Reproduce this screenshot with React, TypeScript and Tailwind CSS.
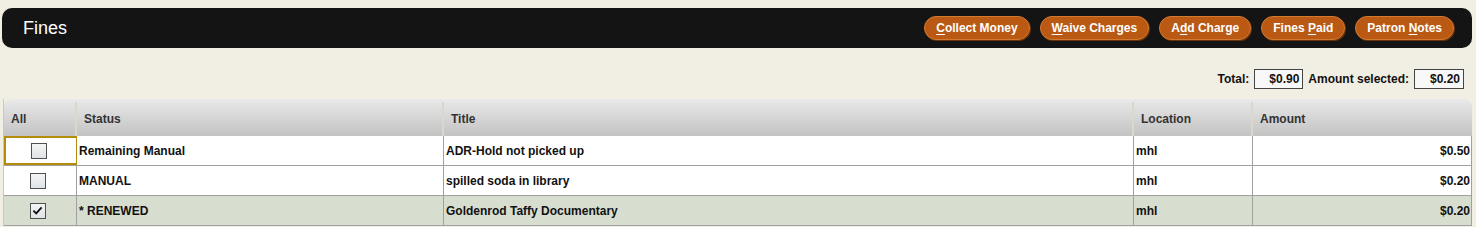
import React from 'react';

interface Fine {
  status: string;
  title: string;
  location: string;
  amount: string;
  checked: boolean;
}

const fines: Fine[] = [
  { status: 'Remaining Manual', title: 'ADR-Hold not picked up', location: 'mhl', amount: '$0.50', checked: false },
  { status: 'MANUAL', title: 'spilled soda in library', location: 'mhl', amount: '$0.20', checked: false },
  { status: '* RENEWED', title: 'Goldenrod Taffy Documentary', location: 'mhl', amount: '$0.20', checked: true },
];

// label split so the access key letter can be underlined
const actions: [string, string, string][] = [
  ['', 'C', 'ollect Money'],
  ['', 'W', 'aive Charges'],
  ['A', 'd', 'd Charge'],
  ['Fines ', 'P', 'aid'],
  ['Patron ', 'N', 'otes'],
];

const Checkbox: React.FC<{ checked: boolean }> = ({ checked }) => (
  <span className="flex h-[16px] w-[16px] items-center justify-center border border-[#505050] bg-gradient-to-b from-[#f4f4f4] to-[#dfe3e6]">
    {checked && (
      <svg viewBox="0 0 12 12" className="h-[11px] w-[11px]">
        <path d="M1.5 6.2 L4.6 9.2 L10.5 2.5" fill="none" stroke="#111" strokeWidth="2" />
      </svg>
    )}
  </span>
);

export default function App() {
  return (
    <div className="h-[227px] w-[1476px] overflow-hidden bg-[#f1eee3] pt-[8px] font-['Liberation_Sans',Arial,sans-serif] text-[12px]">
      {/* title bar */}
      <div className="mx-[2px] mr-[4px] flex h-[40px] items-center rounded-[10px] bg-[#141414] pl-[21px] pr-[18px]">
        <span className="text-[18px] text-white">Fines</span>
        <div className="ml-auto flex gap-[10px]">
          {actions.map(([pre, key, post]) => (
            <button
              key={pre + key + post}
              className="h-[24px] rounded-full border border-[#d47a2f] bg-[#b95914] px-[11px] text-[12px] font-bold text-white shadow-[1px_1px_0_#6b3208]"
            >
              {pre}
              <span className="underline underline-offset-2">{key}</span>
              {post}
            </button>
          ))}
        </div>
      </div>

      {/* totals */}
      <div className="mt-[21px] flex items-center justify-end gap-[5px] pr-[12px] font-bold text-[#111]">
        <span>Total:</span>
        <span className="flex h-[20px] w-[49px] items-center justify-end border border-[#444] bg-[#f8f8f8] pr-[3px]">$0.90</span>
        <span>Amount selected:</span>
        <span className="flex h-[20px] w-[50px] items-center justify-end border border-[#444] bg-[#f8f8f8] pr-[3px]">$0.20</span>
      </div>

      {/* table */}
      <div className="ml-[3px] mr-[4px] mt-[10px] border-l border-[#c8c8c0]">
        <div className="flex h-[37px] rounded-t-[8px] bg-gradient-to-b from-[#e9e9e9] to-[#c3c3c3] pt-[3px] font-bold text-[#333]">
          <div className="flex w-[73px] items-center border-r-2 border-[#d8d8cc] pl-[7px]">All</div>
          <div className="flex w-[367px] items-center border-r-2 border-[#d8d8cc] pl-[7px]">Status</div>
          <div className="flex w-[690px] items-center border-r-2 border-[#d8d8cc] pl-[7px]">Title</div>
          <div className="flex w-[119px] items-center border-r-2 border-[#d8d8cc] pl-[7px]">Location</div>
          <div className="flex flex-1 items-center pl-[7px]">Amount</div>
        </div>
        {fines.map((f, i) => (
          <div
            key={f.title}
            className={`flex h-[30px] border-b border-[#a0a0a0] font-bold text-[#111] ${f.checked ? 'bg-[#d7ddcf]' : 'bg-white'}`}
          >
            <div
              className={`flex w-[73px] items-center justify-center border-r border-[#a0a0a0] pr-[5px] ${i === 0 ? 'border-2 border-[#b38c0b]' : ''}`}
            >
              <Checkbox checked={f.checked} />
            </div>
            <div className="flex w-[367px] items-center border-r border-[#a0a0a0] pl-[2px]">{f.status}</div>
            <div className="flex w-[690px] items-center border-r border-[#a0a0a0] pl-[2px]">{f.title}</div>
            <div className="flex w-[119px] items-center border-r border-[#a0a0a0] pl-[2px]">{f.location}</div>
            <div className="flex flex-1 items-center justify-end border-r border-[#a0a0a0] pr-[1px]">{f.amount}</div>
          </div>
        ))}
      </div>
    </div>
  );
}
